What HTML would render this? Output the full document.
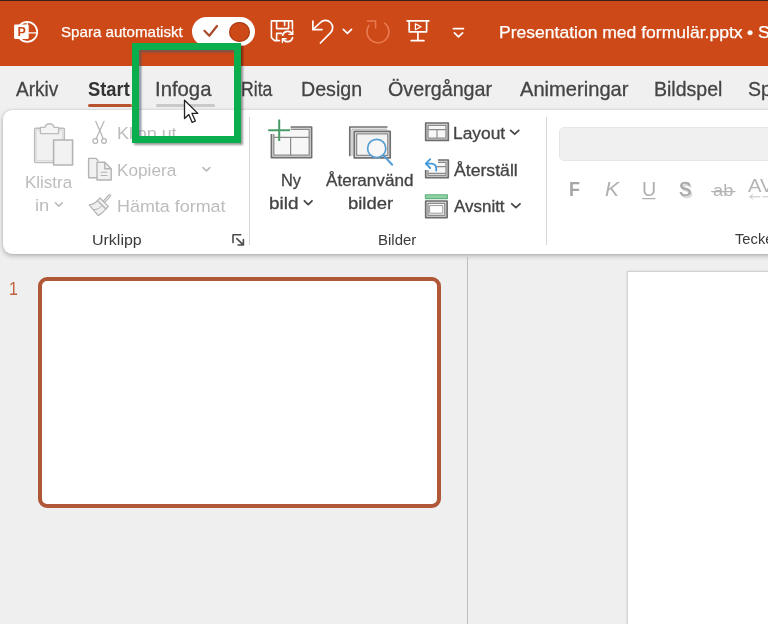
<!DOCTYPE html>
<html lang="sv">
<head>
<meta charset="utf-8">
<title>Presentation med formulär.pptx</title>
<style>
html,body{margin:0;padding:0;}
html{width:768px;height:624px;overflow:hidden;background:#efefef;}
body{width:768px;height:624px;overflow:hidden;position:relative;background:#efefef;font-family:"Liberation Sans",sans-serif;}
#wrap{position:absolute;left:-16px;top:-16px;width:800px;height:656px;overflow:hidden;background:#efefef;filter:blur(0.5px);}
#stage{position:absolute;left:16px;top:16px;width:768px;height:624px;}
.abs{position:absolute;}
.t{position:absolute;white-space:nowrap;line-height:normal;transform-origin:0 0;}
#titlebar{left:-16px;top:-16px;width:800px;height:82px;background:#cd4918;}
#topstrip{left:-16px;top:-16px;width:800px;height:17px;background:#3a2018;}
#tabs{left:-16px;top:66px;width:800px;height:44px;background:#f0f0f0;}
#ribbon{left:3px;top:109.5px;width:800px;height:144px;background:#fff;border-radius:9px;box-shadow:0 2px 5px rgba(0,0,0,.24), 0 0 2px rgba(0,0,0,.15);}
#work{left:0;top:258px;width:768px;height:366px;}
.vsep{width:1px;background:#d6d6d6;top:117px;height:128px;}
#startline{left:88px;top:103.5px;width:44px;height:3.5px;background:#b9532f;border-radius:2px;}
#hoverline{left:156px;top:104px;width:58.5px;height:3px;background:#c9c9c9;border-radius:2px;}
#fontbox{left:558.5px;top:126.5px;width:260px;height:34px;background:#f0f0f0;border:1px solid #e6e6e6;border-radius:5px;box-sizing:border-box;}
#divider{left:466.8px;top:257px;width:1.4px;height:390px;background:#bdbdbd;}
#thumb{left:38px;top:277px;width:403px;height:231px;box-sizing:border-box;border:4px solid #b05738;border-radius:9px;background:#fff;}
#slide{left:626.5px;top:271px;width:200px;height:400px;background:#fff;border:1px solid #d2d2d2;box-shadow:0 0 2px rgba(0,0,0,.12);}
#green{left:131.7px;top:43.3px;width:109.8px;height:99.7px;box-sizing:border-box;border:7px solid #0aae4c;box-shadow:2px 2px 2px rgba(0,0,0,.4), inset 2.5px 2.5px 1.5px rgba(70,90,110,.55);}
#toggle{left:192px;top:16.6px;width:63px;height:29.2px;border-radius:15px;background:#fff;}
#knob{left:229.3px;top:21.6px;width:20.4px;height:20.4px;border-radius:50%;background:#cd4918;box-shadow:inset 0 0 0 1.2px rgba(110,35,10,.35);}
svg{position:absolute;overflow:visible;}
</style>
</head>
<body>
<div id="wrap"><div id="stage">
<div class="abs" id="titlebar"></div>
<div class="abs" id="topstrip"></div>
<div class="abs" id="tabs"></div>
<div class="abs" id="ribbon"></div>
<div class="abs vsep" style="left:249px"></div>
<div class="abs vsep" style="left:546px"></div>
<div class="abs" id="startline"></div>
<div class="abs" id="hoverline"></div>
<div class="abs" id="fontbox"></div>
<div class="abs" id="divider"></div>
<div class="abs" id="thumb"></div>
<div class="abs" id="slide"></div>
<div class="abs" id="toggle"></div>
<div class="abs" id="knob"></div>

<!-- PowerPoint logo -->
<svg width="768" height="66" style="left:0;top:0" viewBox="0 0 768 66" fill="none" stroke="#fff" stroke-width="1.6" stroke-linecap="round" stroke-linejoin="round">
  <circle cx="27.2" cy="31.9" r="10" stroke-width="1.7"/>
  <path d="M27.2 22V32.8H37" stroke-width="1.3"/>
  <rect x="14.1" y="24.6" width="14.6" height="14.4" rx="1.2" fill="#fff" stroke="none"/>
  <text x="17.6" y="36.2" font-family="Liberation Sans, sans-serif" font-weight="bold" font-size="12.5" fill="#cd4918" stroke="none">P</text>
  <!-- toggle check -->
  <path d="M204.4 30.8L209.3 35.8L217 26" stroke="#a8492c" stroke-width="2.2"/>
  <!-- save/sync -->
  <path d="M292.4 29V20.9H271.4V37.6L274.6 40.6H279.5" />
  <path d="M276.6 21.2V28.6H288.6V21.2" />
  <path d="M284.6 21.5V25.5" />
  <path d="M276.6 40.2V33.4H281.5" />
  <path d="M282.6 35.2A5.2 5.2 0 0 1 292.2 34" stroke-width="1.7"/>
  <path d="M292.6 37.6A5.2 5.2 0 0 1 283 39" stroke-width="1.7"/>
  <path d="M292.8 30.6V34.4H289" stroke-width="1.4"/>
  <path d="M282.4 42.6V38.8H286.2" stroke-width="1.4"/>
  <!-- undo -->
  <path d="M312.9 21V29.6H322" stroke-width="1.7"/>
  <path d="M313 29.5L320.3 22.6A7.2 7.2 0 0 1 330.6 32.7L320.4 43" stroke-width="1.7"/>
  <path d="M343.3 29.3L347.4 33.3L351.5 29.3" stroke-width="1.7"/>
  <!-- redo (dimmed) -->
  <g stroke="#ea7b50" stroke-width="1.5">
    <path d="M384.6 23A11 11 0 1 1 369 25.4"/>
    <path d="M367.4 20.9H375.6V28"/>
  </g>
  <!-- presenter -->
  <path d="M407.2 20.9H428.8" stroke-width="1.7"/>
  <path d="M409.2 21V31.8H426.6V21" stroke-width="1.7"/>
  <path d="M417.9 32V40.6M411.2 40.6H424" stroke-width="1.7"/>
  <path d="M415.4 23.9V29.7L421 26.8Z" stroke-width="1.2"/>
  <!-- customize QAT -->
  <path d="M453.4 28.7H463.4M454.4 32.8L458.5 36.8L462.6 32.8" stroke-width="1.7"/>
</svg>

<!-- Ribbon icons -->
<svg width="768" height="150" style="left:0;top:110px" viewBox="0 110 768 150" fill="none" stroke-linecap="round" stroke-linejoin="round">
  <!-- paste -->
  <g stroke="#bcbcbc" stroke-width="1.4">
    <rect x="34.6" y="128.2" width="29.8" height="34.4" rx="1" fill="#ececec"/>
    <rect x="36.6" y="130.2" width="25.8" height="30.4" fill="#f1f1f1" stroke="#dadada" stroke-width="1"/>
    <path d="M40.4 133.6V127.4H45A4.6 4.6 0 0 1 54 127.4H58.6V133.6Z" fill="#f4f4f4"/>
    <rect x="53.6" y="140" width="19" height="25" fill="#f2f2f2" stroke="#b4b4b4" stroke-width="1.6"/>
  </g>
  <!-- scissors -->
  <g stroke="#b4b4b4" stroke-width="1.2">
    <path d="M95.8 121.4L103.2 138.6M104 121.4L96.2 138.6"/>
    <circle cx="95.3" cy="141" r="2.4"/>
    <circle cx="104" cy="141" r="2.4"/>
  </g>
  <!-- copy -->
  <g stroke="#b4b4b4" stroke-width="1.4">
    <path d="M97 177.8H88.6V158.4H96L98 160.4" fill="#f1f1f1"/>
    <path d="M97 162.2H104.8L111.2 168.8V180H97Z" fill="#f1f1f1"/>
    <path d="M104.8 162.4V168.8H111" />
    <path d="M101 172.3H107M101 175.5H107" stroke-width="1.1"/>
  </g>
  <!-- format painter -->
  <g stroke="#b4b4b4" stroke-width="1.3">
    <path d="M109.6 195.6L104 201.8" stroke-width="3.2"/>
    <path d="M109.6 195.6L104 201.8" stroke="#fff" stroke-width="1"/>
    <path d="M100 198L108.4 206.4L105.8 209L97.4 200.6Z" fill="#f1f1f1"/>
    <path d="M97.4 200.6C95 203.5 92 204.6 89.2 204.8L98.2 215.6C101.5 213.6 104.2 211.4 105.8 209Z" fill="#efefef"/>
    <path d="M93.5 209.8C97 209.6 100 208.4 102 205.4" stroke-width="1"/>
  </g>
  <!-- dialog launcher -->
  <g stroke="#4c4c4c" stroke-width="1.6">
    <path d="M233 242.6V234.8H240.8"/>
    <path d="M236.8 238.6L243 244.6M243.4 239.6V245H238"/>
  </g>
  <!-- new slide -->
  <g>
    <rect x="271.4" y="127" width="40.2" height="30.6" fill="#e2e2e2" stroke="#707070" stroke-width="1.7"/>
    <rect x="273.8" y="129.4" width="35.4" height="25.8" fill="#f7f7f7" stroke="#8c8c8c" stroke-width="1.3"/>
    <path d="M274.4 137.4H308.6M290.6 137.4V155" stroke="#8a8a8a" stroke-width="1.2"/>
    <path d="M266 117H290.6V132.6H283V134H266Z" fill="#fff" stroke="none"/>
    <path d="M268.2 130.3H290M279.2 119.4V141" stroke="#4a9c66" stroke-width="2" stroke-linecap="butt"/>
  </g>
  <!-- reuse slides -->
  <g>
    <path d="M349.8 155.4V127H386.8" stroke="#707070" stroke-width="1.7"/>
    <path d="M352 155.4V129.2H386.8" stroke="#a8a8a8" stroke-width="1"/>
    <rect x="354.2" y="131.4" width="36" height="26.4" fill="#e2e2e2" stroke="#707070" stroke-width="1.7"/>
    <rect x="356.6" y="133.8" width="31.2" height="21.6" fill="#f3f3f3" stroke="#8c8c8c" stroke-width="1.3"/>
    <circle cx="376.7" cy="148.4" r="9.1" fill="#f8f8f8" stroke="#569dd2" stroke-width="1.7"/>
    <path d="M383.4 155.2L392.2 164.8" stroke="#569dd2" stroke-width="2"/>
  </g>
  <!-- layout -->
  <g>
    <rect x="425.7" y="123" width="22.6" height="17.4" fill="#e2e2e2" stroke="#6c6c6c" stroke-width="1.7"/>
    <rect x="428" y="125.3" width="18" height="12.8" fill="#f7f7f7" stroke="#8c8c8c" stroke-width="1.3"/>
    <path d="M428.6 129.6H445.4M437 129.6V137.8" stroke="#8a8a8a" stroke-width="1.1"/>
  </g>
  <!-- reset -->
  <g>
    <rect x="425.7" y="160" width="22.6" height="17.6" fill="#e2e2e2" stroke="#6c6c6c" stroke-width="1.7"/>
    <rect x="428" y="162.3" width="18" height="13" fill="#f7f7f7" stroke="#8c8c8c" stroke-width="1.3"/>
    <path d="M436 166.6H445.4M429 173.4H445" stroke="#8c8c8c" stroke-width="1.3"/>
    <path d="M422 156H438V165H436.5V170H422Z" fill="#fff" stroke="none"/>
    <path d="M426.2 163.6H431.6A4.6 4.6 0 0 1 436.2 168.2V170.6" stroke="#3f97dc" stroke-width="1.8"/>
    <path d="M430.2 159.2L425.8 163.6L430.2 168" stroke="#3f97dc" stroke-width="1.8"/>
  </g>
  <!-- section -->
  <g>
    <rect x="425.4" y="194.8" width="22" height="3.8" fill="#8fd0a4" stroke="#5fb27e" stroke-width="1.1"/>
    <rect x="425.7" y="201" width="21.4" height="16.6" fill="#e2e2e2" stroke="#6c6c6c" stroke-width="1.7"/>
    <rect x="428" y="203.3" width="16.8" height="12" fill="#f7f7f7" stroke="#8c8c8c" stroke-width="1.3"/>
    <rect x="430" y="205.6" width="12.8" height="7.6" fill="#fff" stroke="#9a9a9a" stroke-width="1"/>
  </g>
  <!-- chevrons -->
  <g stroke="#4a4a4a" stroke-width="1.8">
    <path d="M510.6 130.4L514.7 134.2L518.8 130.4"/>
    <path d="M511.8 203.8L515.9 207.6L520 203.8"/>
    <path d="M304.4 200.8L308.2 204.6L312 200.8"/>
  </g>
  <g stroke="#b8b8b8" stroke-width="1.6">
    <path d="M55.4 202.8L58.8 206.2L62.2 202.8"/>
    <path d="M203 167.6L206.4 171L209.8 167.6"/>
  </g>
  <!-- font buttons decorations -->
  <path d="M642.6 198.6H655" stroke="#b0b0b0" stroke-width="1.3"/>
  <path d="M711.6 191.6H735" stroke="#b4b4b4" stroke-width="1.2"/>
  <path d="M750 196.8H760M750 196.8L752.6 194.6M750 196.8L752.6 199M763 196.8H770" stroke="#c4c4c4" stroke-width="1"/>
</svg>


<span class="t" style="left:61.00px;top:24.00px;font-size:14.5px;color:#fff;-webkit-text-stroke:0.25px currentColor;transform:scaleX(1.0417);">Spara automatiskt</span>
<span class="t" style="left:499.00px;top:24.00px;font-size:16px;color:#fff;-webkit-text-stroke:0.25px currentColor;transform:scaleX(1.0953);">Presentation med formulär.pptx</span>
<span class="t" style="left:747.00px;top:24.00px;font-size:16px;color:#fff;-webkit-text-stroke:0.25px currentColor;transform:scaleX(1.0914);">• Sparat</span>
<span class="t" style="left:16.00px;top:77.00px;font-size:20.6px;color:#444444;-webkit-text-stroke:0.3px currentColor;transform:scaleX(0.9235);">Arkiv</span>
<span class="t" style="left:88.00px;top:77.00px;font-size:20.6px;color:#333;font-weight:bold;transform:scaleX(0.8893);">Start</span>
<span class="t" style="left:155.00px;top:77.00px;font-size:20.6px;color:#444444;-webkit-text-stroke:0.3px currentColor;transform:scaleX(0.9853);">Infoga</span>
<span class="t" style="left:241.00px;top:77.00px;font-size:20.6px;color:#444444;-webkit-text-stroke:0.3px currentColor;transform:scaleX(0.8554);">Rita</span>
<span class="t" style="left:301.00px;top:77.00px;font-size:20.6px;color:#444444;-webkit-text-stroke:0.3px currentColor;transform:scaleX(0.9531);">Design</span>
<span class="t" style="left:388.00px;top:77.00px;font-size:20.6px;color:#444444;-webkit-text-stroke:0.3px currentColor;transform:scaleX(0.9574);">Övergångar</span>
<span class="t" style="left:520.00px;top:77.00px;font-size:20.6px;color:#444444;-webkit-text-stroke:0.3px currentColor;transform:scaleX(0.9771);">Animeringar</span>
<span class="t" style="left:654.00px;top:77.00px;font-size:20.6px;color:#444444;-webkit-text-stroke:0.3px currentColor;transform:scaleX(0.9481);">Bildspel</span>
<span class="t" style="left:748.00px;top:77.00px;font-size:20.6px;color:#444444;-webkit-text-stroke:0.3px currentColor;transform:scaleX(0.9449);">Spela in</span>
<span class="t" style="left:25.00px;top:173.00px;font-size:16.3px;color:#bcbcbc;transform:scaleX(1.0411);">Klistra</span>
<span class="t" style="left:35.00px;top:196.00px;font-size:16.3px;color:#bcbcbc;transform:scaleX(1.1260);">in</span>
<span class="t" style="left:117.00px;top:124.00px;font-size:16.3px;color:#bcbcbc;transform:scaleX(1.0961);">Klipp ut</span>
<span class="t" style="left:117.00px;top:161.00px;font-size:16.3px;color:#bcbcbc;transform:scaleX(1.0571);">Kopiera</span>
<span class="t" style="left:117.00px;top:197.00px;font-size:16.3px;color:#bcbcbc;transform:scaleX(1.1003);">Hämta format</span>
<span class="t" style="left:92.00px;top:232.00px;font-size:14.5px;color:#3a3a3a;transform:scaleX(1.1011);">Urklipp</span>
<span class="t" style="left:281.00px;top:171.00px;font-size:16.3px;color:#444444;-webkit-text-stroke:0.3px currentColor;transform:scaleX(1.0067);">Ny</span>
<span class="t" style="left:269.00px;top:194.00px;font-size:16.3px;color:#444444;-webkit-text-stroke:0.3px currentColor;transform:scaleX(1.1600);">bild</span>
<span class="t" style="left:326.00px;top:171.00px;font-size:16.3px;color:#444444;-webkit-text-stroke:0.3px currentColor;transform:scaleX(1.0495);">Återanvänd</span>
<span class="t" style="left:348.00px;top:194.00px;font-size:16.3px;color:#444444;-webkit-text-stroke:0.3px currentColor;transform:scaleX(1.1332);">bilder</span>
<span class="t" style="left:453.00px;top:124.00px;font-size:16.3px;color:#444444;-webkit-text-stroke:0.3px currentColor;transform:scaleX(1.0674);">Layout</span>
<span class="t" style="left:454.00px;top:161.00px;font-size:16.3px;color:#444444;-webkit-text-stroke:0.3px currentColor;transform:scaleX(1.0839);">Återställ</span>
<span class="t" style="left:454.00px;top:197.00px;font-size:16.3px;color:#444444;-webkit-text-stroke:0.3px currentColor;transform:scaleX(1.0416);">Avsnitt</span>
<span class="t" style="left:378.00px;top:232.00px;font-size:14.5px;color:#3a3a3a;transform:scaleX(1.0320);">Bilder</span>
<span class="t" style="left:735.00px;top:231.00px;font-size:14.5px;color:#3a3a3a;transform:scaleX(1.0139);">Tecken</span>
<span class="t" style="left:569.00px;top:178.00px;font-size:19.5px;color:#a6a6a6;font-weight:bold;transform:scaleX(0.9200);">F</span>
<span class="t" style="left:605.00px;top:178.00px;font-size:19.5px;color:#b0b0b0;font-style:italic;transform:scaleX(1.0833);">K</span>
<span class="t" style="left:642.00px;top:178.00px;font-size:19.5px;color:#b0b0b0;transform:scaleX(1.0083);">U</span>
<span class="t" style="left:679.00px;top:178.00px;font-size:19.5px;color:#a8a8a8;text-shadow:1.5px 1.5px 1px #ccc;-webkit-text-stroke:0.5px currentColor;transform:scaleX(0.9500);">S</span>
<span class="t" style="left:713.00px;top:182.00px;font-size:16px;color:#b4b4b4;transform:scaleX(1.1406);">ab</span>
<span class="t" style="left:748.00px;top:176.00px;font-size:17.5px;color:#b4b4b4;transform:scaleX(1.1562);">AV</span>
<span class="t" style="left:9.00px;top:278.00px;font-size:19px;color:#c0603f;transform:scaleX(0.8400);">1</span>

<div class="abs" id="green"></div>
<svg width="20" height="28" style="left:183px;top:99px" viewBox="0 0 20 28">
  <path d="M1.5 1.2V19.6L5.8 15.6L9.2 23.4L12.4 22L9 14.4H14.8Z" fill="#fff" stroke="#222" stroke-width="1.3" stroke-linejoin="round"/>
</svg>

</div></div>
</body>
</html>
